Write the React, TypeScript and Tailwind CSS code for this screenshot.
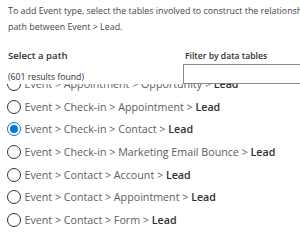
const paths = [
  ['Event', 'Appointment', 'Opportunity'],
  ['Event', 'Check-in', 'Appointment'],
  ['Event', 'Check-in', 'Contact'],
  ['Event', 'Check-in', 'Marketing Email Bounce'],
  ['Event', 'Contact', 'Account'],
  ['Event', 'Contact', 'Appointment'],
  ['Event', 'Contact', 'Form'],
];

function Radio({ checked }: { checked: boolean }) {
  return (
    <span
      className={`flex h-[14px] w-[14px] shrink-0 items-center justify-center rounded-full border ${
        checked ? 'border-[#0078d4]' : 'border-[#323130]'
      }`}
    >
      {checked && <span className="h-[8px] w-[8px] rounded-full bg-[#0078d4]" />}
    </span>
  );
}

export default function App() {
  const selected = 2;

  return (
    <div
      className="h-[237px] w-[300px] overflow-hidden bg-white text-[#323130]"
      style={{ fontFamily: '"Segoe UI", "Open Sans", sans-serif' }}
    >
      <p className="m-0 whitespace-nowrap px-[8px] pt-[3px] text-[8.9px] leading-[16px] text-[#484644]">
        To add Event type, select the tables involved to construct the relationship
        <br />
        path between Event &gt; Lead.
      </p>

      <div className="mt-[13px] flex">
        <div className="w-[183px] shrink-0 pl-[8px]">
          <div className="text-[9.6px] font-semibold leading-[16px]">Select a path</div>
          <div className="mt-[5px] text-[8.7px] leading-[16px]">(601 results found)</div>
        </div>
        <div className="flex-1">
          <div className="pl-[2px] text-[8.6px] font-semibold leading-[16px]">Filter by data tables</div>
          <div className="relative z-10 h-[20px] w-[140px] border border-[#8a8886] bg-white" />
        </div>
      </div>

      <div className="-mt-px h-[160px] overflow-hidden">
        <div className="-mt-[11px]">
          {paths.map((p, i) => (
            <label
              key={i}
              className="flex h-[22.6px] items-center gap-[3.5px] whitespace-nowrap pl-[7px] text-[10.7px]"
            >
              <Radio checked={i === selected} />
              <span className="text-[#605e5c]">
                {p.join(' > ')} &gt; <span className="font-semibold text-[#323130]">Lead</span>
              </span>
            </label>
          ))}
        </div>
      </div>
    </div>
  );
}
